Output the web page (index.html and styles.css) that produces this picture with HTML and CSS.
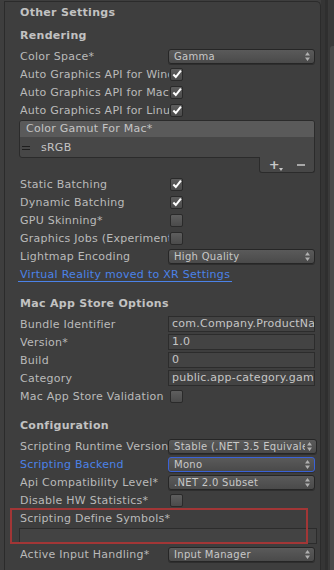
FILE: index.html
```html
<!DOCTYPE html>
<html lang="en">
<head>
    <meta charset="UTF-8">
    <title>Other Settings</title>
    <link rel="stylesheet" href="styles.css">
</head>
<body>
    <div class="panel">
        <div class="title">Other Settings</div>

        <div class="header first">Rendering</div>
        <div class="row">
            <div class="label">Color Space*</div>
            <div class="popup"><span>Gamma</span><svg class="arrows" width="5" height="9" viewBox="0 0 5 9"><path d="M2.5 0 L5 3.5 L0 3.5 Z M2.5 9 L5 5.5 L0 5.5 Z"/></svg></div>
        </div>
        <div class="row">
            <div class="label">Auto Graphics API for Windows</div>
            <div class="check on"><svg width="11" height="10" viewBox="0 0 11 10"><path d="M1.5 5.5 L4.2 8.3 L9.8 1.2" /></svg></div>
        </div>
        <div class="row">
            <div class="label">Auto Graphics API for Mac</div>
            <div class="check on"><svg width="11" height="10" viewBox="0 0 11 10"><path d="M1.5 5.5 L4.2 8.3 L9.8 1.2" /></svg></div>
        </div>
        <div class="row">
            <div class="label">Auto Graphics API for Linux</div>
            <div class="check on"><svg width="11" height="10" viewBox="0 0 11 10"><path d="M1.5 5.5 L4.2 8.3 L9.8 1.2" /></svg></div>
        </div>

        <div class="list">
            <div class="list-head">Color Gamut For Mac*</div>
            <div class="list-item"><span class="handle"></span>sRGB</div>
        </div>
        <div class="list-foot">
            <span class="plus">+<i></i></span>
            <span class="minus"></span>
        </div>

        <div class="row">
            <div class="label">Static Batching</div>
            <div class="check on"><svg width="11" height="10" viewBox="0 0 11 10"><path d="M1.5 5.5 L4.2 8.3 L9.8 1.2" /></svg></div>
        </div>
        <div class="row">
            <div class="label">Dynamic Batching</div>
            <div class="check on"><svg width="11" height="10" viewBox="0 0 11 10"><path d="M1.5 5.5 L4.2 8.3 L9.8 1.2" /></svg></div>
        </div>
        <div class="row">
            <div class="label">GPU Skinning*</div>
            <div class="check"></div>
        </div>
        <div class="row">
            <div class="label">Graphics Jobs (Experimental)</div>
            <div class="check"></div>
        </div>
        <div class="row">
            <div class="label">Lightmap Encoding</div>
            <div class="popup"><span>High Quality</span><svg class="arrows" width="5" height="9" viewBox="0 0 5 9"><path d="M2.5 0 L5 3.5 L0 3.5 Z M2.5 9 L5 5.5 L0 5.5 Z"/></svg></div>
        </div>
        <div class="row">
            <span class="link">Virtual Reality moved to XR Settings</span>
        </div>

        <div class="header">Mac App Store Options</div>
        <div class="row">
            <div class="label">Bundle Identifier</div>
            <div class="field">com.Company.ProductName</div>
        </div>
        <div class="row">
            <div class="label">Version*</div>
            <div class="field">1.0</div>
        </div>
        <div class="row">
            <div class="label">Build</div>
            <div class="field">0</div>
        </div>
        <div class="row">
            <div class="label">Category</div>
            <div class="field">public.app-category.games</div>
        </div>
        <div class="row">
            <div class="label">Mac App Store Validation</div>
            <div class="check"></div>
        </div>

        <div class="header">Configuration</div>
        <div class="row">
            <div class="label">Scripting Runtime Version</div>
            <div class="popup"><span>Stable (.NET 3.5 Equivalent)</span><svg class="arrows" width="5" height="9" viewBox="0 0 5 9"><path d="M2.5 0 L5 3.5 L0 3.5 Z M2.5 9 L5 5.5 L0 5.5 Z"/></svg></div>
        </div>
        <div class="row">
            <div class="label blue">Scripting Backend</div>
            <div class="popup focused"><span>Mono</span><svg class="arrows" width="5" height="9" viewBox="0 0 5 9"><path d="M2.5 0 L5 3.5 L0 3.5 Z M2.5 9 L5 5.5 L0 5.5 Z"/></svg></div>
        </div>
        <div class="row">
            <div class="label">Api Compatibility Level*</div>
            <div class="popup"><span>.NET 2.0 Subset</span><svg class="arrows" width="5" height="9" viewBox="0 0 5 9"><path d="M2.5 0 L5 3.5 L0 3.5 Z M2.5 9 L5 5.5 L0 5.5 Z"/></svg></div>
        </div>
        <div class="row">
            <div class="label">Disable HW Statistics*</div>
            <div class="check"></div>
        </div>

        <div class="symbols">
            <div class="row">
                <div class="label wide">Scripting Define Symbols*</div>
            </div>
            <div class="field full"></div>
            <div class="marker"></div>
        </div>

        <div class="row">
            <div class="label">Active Input Handling*</div>
            <div class="popup"><span>Input Manager</span><svg class="arrows" width="5" height="9" viewBox="0 0 5 9"><path d="M2.5 0 L5 3.5 L0 3.5 Z M2.5 9 L5 5.5 L0 5.5 Z"/></svg></div>
        </div>
    </div>

    <div class="gutter">
        <div class="track"></div>
        <div class="rail"></div>
        <div class="bar"><div class="thumb"></div></div>
    </div>
</body>
</html>
```

FILE: styles.css
```css
body {
    margin: 0;
    height: 570px;
    overflow: hidden;
    display: flex;
    background-color: #3e3e3e;
    color: #bababa;
    font-family: "DejaVu Sans", sans-serif;
    font-size: 11px;
}
.panel {
    margin: 1px 0 0 4px;
    padding: 2px 5px 0 15px;
    box-sizing: border-box;
    width: 317px;
    border: 1px solid #2b2b2b;
    border-bottom: none;
    border-radius: 0 5px 0 0;
    flex: none;
}
.title, .header {
    height: 18px;
    line-height: 18px;
    font-weight: bold;
    color: #c2c2c2;
    letter-spacing: 0.3px;
}
.header {
    margin: 12px 0 2px;
}
.header.first {
    margin-top: 5px;
}
.row {
    display: flex;
    align-items: center;
    height: 18px;
}
.label {
    width: 149px;
    flex: none;
    overflow: hidden;
    white-space: nowrap;
    letter-spacing: 0.25px;
}
.label.wide {
    width: auto;
}
.blue {
    color: #4b82e8;
}
.popup {
    height: 13px;
    box-sizing: content-box;
    display: flex;
    align-items: center;
    padding: 0 4px 0 5px;
    margin-left: -1px;
    width: 138px;
    border: 1px solid #262626;
    border-radius: 3px;
    background: linear-gradient(#5a5a5a, #4a4a4a);
    box-shadow: 0 1px 0 rgba(0, 0, 0, 0.25);
    font-size: 10px;
    letter-spacing: 0.3px;
    color: #c8c8c8;
}
.popup span {
    flex: 1;
    overflow: hidden;
    white-space: nowrap;
}
.popup.focused {
    border-color: #3a62d8;
}
.arrows {
    fill: #b0b0b0;
    flex: none;
    margin-left: 2px;
}
.check {
    width: 11px;
    height: 11px;
    margin-left: 1px;
    border: 1px solid #2a2a2a;
    border-radius: 2px;
    background: linear-gradient(#5e5e5e, #4b4b4b);
    display: flex;
    align-items: center;
    justify-content: center;
}
.check svg {
    fill: none;
    stroke: #ffffff;
    stroke-width: 2.2;
    margin: -1px 0 0 1px;
}
.field {
    width: 140px;
    height: 14px;
    line-height: 14px;
    margin-left: -1px;
    padding: 0 3px;
    border: 1px solid #2c2c2c;
    background-color: #434343;
    overflow: hidden;
    white-space: nowrap;
    letter-spacing: 0.25px;
    color: #c6c6c6;
}
.field.full {
    width: 290px;
    margin: 1px 0 1px -1px;
}
.link {
    color: #4b82e8;
    line-height: 13px;
    margin: 2px 0 0 -2px;
    padding: 0 2px;
    border-bottom: 1px solid #4b82e8;
    letter-spacing: 0.28px;
}
.list {
    margin: 1px 0 0 -1px;
    border: 1px solid #2b2b2b;
    border-radius: 3px 3px 0 3px;
    background-color: #474747;
}
.list-head {
    height: 16px;
    line-height: 16px;
    padding-left: 6px;
    background-color: #5a5a5a;
    border-radius: 2px 2px 0 0;
    color: #c4c4c4;
    letter-spacing: 0.25px;
}
.list-item {
    height: 20px;
    display: flex;
    align-items: center;
    color: #c4c4c4;
    letter-spacing: 0.25px;
}
.handle {
    width: 8px;
    height: 2px;
    margin: 2px 11px 0 2px;
    border-top: 1px solid #1e1e1e;
    border-bottom: 1px solid #1e1e1e;
}
.list-foot {
    width: 54px;
    height: 14px;
    margin: -1px 0 2px auto;
    border: 1px solid #2b2b2b;
    border-top: none;
    border-radius: 0 0 3px 3px;
    background-color: #474747;
    display: flex;
    align-items: center;
    justify-content: space-around;
    padding-top: 1px;
}
.plus {
    color: #c8c8c8;
    font-weight: bold;
    font-size: 13px;
    line-height: 12px;
    position: relative;
}
.plus i {
    position: absolute;
    right: -3px;
    bottom: 0;
    border-left: 2px solid transparent;
    border-right: 2px solid transparent;
    border-top: 3px solid #c8c8c8;
}
.minus {
    width: 8px;
    height: 2px;
    background-color: #a8a8a8;
}
.symbols {
    position: relative;
}
.marker {
    position: absolute;
    left: -10px;
    top: -1px;
    width: 294px;
    height: 32px;
    border: 2px solid #a23636;
}
.gutter {
    flex: 1;
    display: flex;
}
.track {
    width: 4px;
    background-color: #353535;
}
.rail {
    width: 3px;
    background-color: #2f2f2f;
}
.bar {
    flex: 1;
    border-left: 1px solid #3a3a3a;
    background-color: #393939;
    padding-top: 46px;
}
.thumb {
    height: 100%;
    margin-left: 1px;
    border-radius: 3px 0 0 0;
    background-color: #4a4a4a;
}
```
